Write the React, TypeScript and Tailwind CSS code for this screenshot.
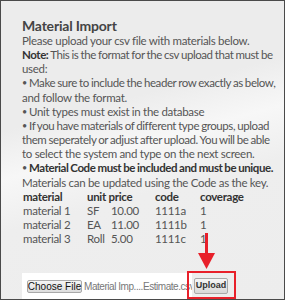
const rows = [
  ["material 1", "SF", "10.00", "1111a", "1"],
  ["material 2", "EA", "11.00", "1111b", "1"],
  ["material 3", "Roll", "5.00", "1111c", "1"],
];

function Bullet() {
  return <span className="inline-block w-[7px] text-[9px] align-top">•</span>;
}

// one rendered line of the help text, wraps fixed like the original
function Line({ children, tight }: { children: React.ReactNode; tight?: boolean }) {
  return (
    <span className={tight ? "block whitespace-nowrap tracking-[-0.42px] [word-spacing:-0.4px]" : "block whitespace-nowrap"}>
      {children}
    </span>
  );
}

export default function App() {
  return (
    <div className="relative flex flex-col w-[285px] h-[300px] overflow-hidden border border-[#4a4a4a] bg-[linear-gradient(165deg,#ececec_0%,#ececec_35%,#f7f7f7_48%,#eeeeee_62%,#ededed_100%)] font-['Lato',sans-serif] text-[#555555]">
      <div className="pl-[21px] pt-[17px] text-[11.5px] leading-[14.15px] tracking-[-0.3px]">
        <h3 className="text-[14px] leading-[16px] font-bold text-[#444444] tracking-[-0.2px]">Material Import</h3>
        <Line>Please upload your csv file with materials below.</Line>
        <Line tight>
          <b className="text-[#333333]">Note:</b> This is the format for the csv upload that must be
        </Line>
        <Line>used:</Line>
        <Line tight>
          <Bullet />
          Make sure to include the header row exactly as below,
        </Line>
        <Line>and follow the format.</Line>
        <Line>
          <Bullet />
          Unit types must exist in the database
        </Line>
        <Line tight>
          <Bullet />
          If you have materials of different type groups, upload
        </Line>
        <Line tight>them seperately or adjust after upload. You will be able</Line>
        <Line>to select the system and type on the next screen.</Line>
        <Line tight>
          <Bullet />
          <b className="text-[#333333]">Material Code must be included and must be unique.</b>
        </Line>
        <Line>Materials can be updated using the Code as the key.</Line>

        {/* sample csv */}
        <table className="border-collapse">
          <thead>
            <tr className="text-[#333333] text-left">
              <th className="w-[65px] pl-[1px] font-bold">material</th>
              <th className="font-bold" colSpan={2}>unit price</th>
              <th className="font-bold">code</th>
              <th className="font-bold">coverage</th>
            </tr>
          </thead>
          <tbody>
            {rows.map((r) => (
              <tr key={r[0]}>
                <td className="pl-[1px]">{r[0]}</td>
                <td className="w-[24px]">{r[1]}</td>
                <td className="w-[44px]">{r[2]}</td>
                <td className="w-[45px]">{r[3]}</td>
                <td>{r[4]}</td>
              </tr>
            ))}
          </tbody>
        </table>
      </div>

      {/* file row */}
      <div className="mt-auto ml-[21px] flex items-center font-['Liberation_Sans',sans-serif]">
        <div className="flex items-center shrink-0 w-[170px] h-[26px] bg-white pl-[5px] overflow-hidden">
          <span className="shrink-0 w-[55px] h-[13px] flex items-center justify-center whitespace-nowrap border border-[#a9a9a9] rounded-[2px] bg-[linear-gradient(#f6f6f6,#dddddd)] text-[10px] text-[#111111]">
            Choose File
          </span>
          <span className="ml-[2px] text-[10px] tracking-[-0.45px] text-[#777777] whitespace-nowrap">
            Material Imp....Estimate.csv
          </span>
        </div>
        <span className="ml-[2px] shrink-0 w-[34px] h-[16px] flex items-center justify-center border border-[#a9a9a9] rounded-[2px] bg-[linear-gradient(#f6f6f6,#d8d8d8)] text-[9px] font-bold text-[#333333]">
          Upload
        </span>
      </div>

      {/* highlight */}
      <div className="absolute left-[186px] top-[270px] w-[49px] h-[28px] border-2 border-[#e8202a]" />
      <svg className="absolute left-[196px] top-[232px]" width="20" height="38" viewBox="0 0 20 38">
        <rect x="8" y="0" width="3" height="22" fill="#e8202a" />
        <polygon points="1,20 18,20 9.5,36" fill="#e8202a" />
      </svg>
    </div>
  );
}
